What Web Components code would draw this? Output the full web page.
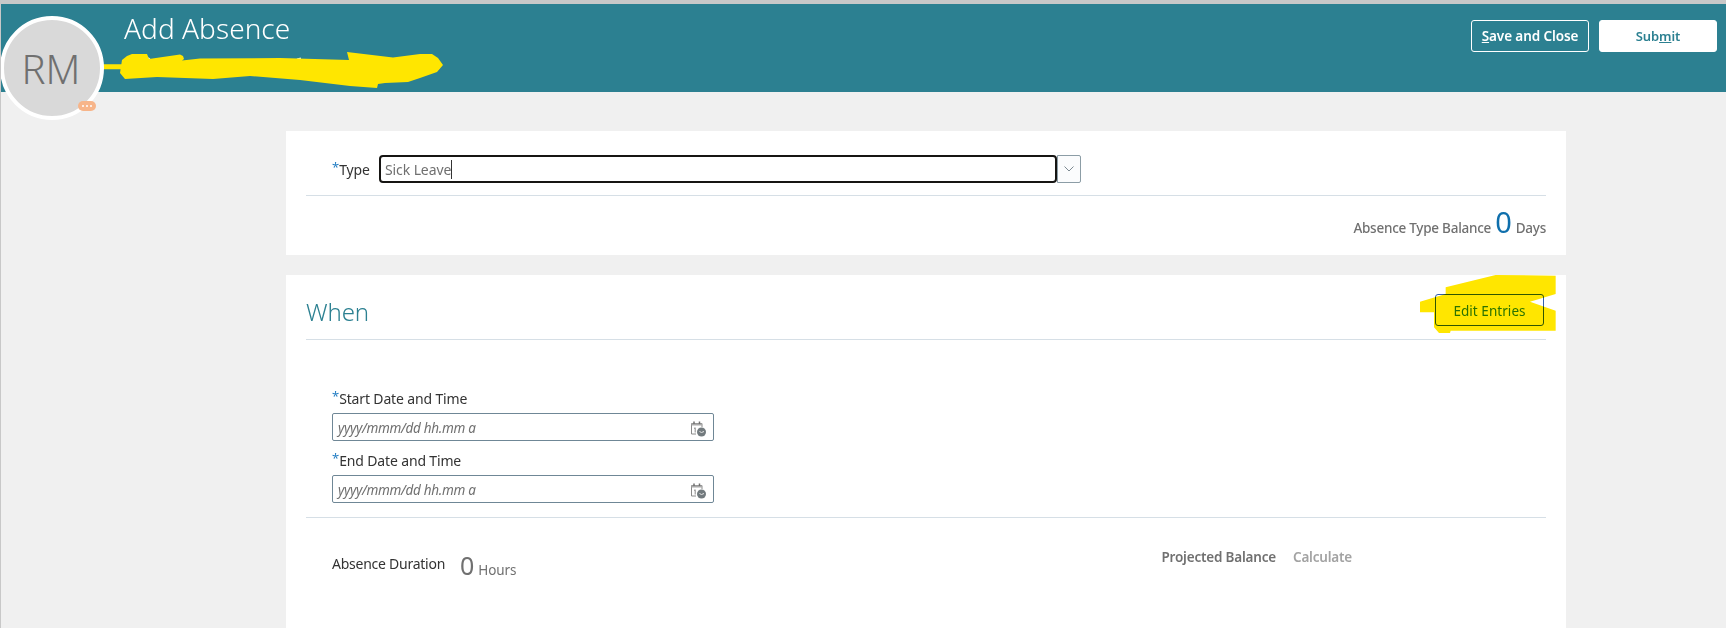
<!DOCTYPE html>
<html lang="en"><head><meta charset="utf-8"><title>Add Absence</title>
<style>
html,body{margin:0;padding:0;background:#f0f0f0;font-family:"Noto Sans","Open Sans",sans-serif;}
</style></head>
<body>
<template id="t-app"><style>
:host{display:flex;flex-direction:column;width:1726px;height:628px;overflow:hidden;box-sizing:border-box;border-top:4px solid #c8c8c8;border-left:1px solid #c8c8c8;background:#f0f0f0;position:relative;color:#333;}
main{display:flex;flex-direction:column;gap:20px;padding:39px 0 0 285px;width:1280px;}
</style><slot name="header"></slot><main><slot></slot></main></template>

<template id="t-header"><style>
:host{display:flex;justify-content:space-between;align-items:flex-start;height:88px;background:#2c8091;color:#fff;position:relative;flex:none;}
.titles{padding-left:123px;}
h1{margin:0;font:300 28px/38px "Noto Sans",sans-serif;padding-top:5px;letter-spacing:.05px;}
.actions{display:flex;gap:10px;padding:16px 9px 0 0;}
.scribble{position:absolute;left:-1px;top:-4px;width:460px;height:100px;pointer-events:none;}
</style>
<div class="titles"><h1><slot name="title"></slot></h1></div>
<div class="actions"><slot name="actions"></slot></div>
<svg class="scribble" viewBox="0 0 460 100" aria-hidden="true">
<path d="M297 59.500L301 58.500M148 58L150 60M436 70L439 68" stroke="#e8f2f4" stroke-width="2" fill="none"/>
<path d="M103 66.700L124 66.700" stroke="#ffe600" stroke-width="5" stroke-linecap="round" fill="none"/>
<path fill="#ffe600" d="M122 60L127 56 132 54 147 54 149 59 180 54.500 183 56 184 59 182 60.500 200 58.500 280 58 349 60 347 52 393 57.500 420 54 432 54 438 58 443 65 437 72 420 78 408 82 385 83 378 84 377 88 350 86 300 80 250 76 213 79 157 77 125 79 120 73Z"/>
</svg>
<slot name="avatar"></slot></template>

<template id="t-avatar"><style>
:host{display:flex;position:absolute;left:-1px;top:12px;width:104px;height:104px;box-sizing:border-box;border:4px solid #fff;border-radius:50%;background:#d9d9d9;align-items:center;justify-content:center;color:#707070;font:300 40px "Noto Sans",sans-serif;z-index:2;letter-spacing:0;padding-right:2px;}
.badge{position:absolute;left:74px;top:81px;width:18px;height:10px;background:#f7b58a;border-radius:5px;display:flex;align-items:center;justify-content:center;gap:2px;}
.badge i{width:2px;height:2px;background:#fff;border-radius:50%;}
</style><slot></slot><div class="badge"><i></i><i></i><i></i></div></template>

<template id="t-button"><style>
:host{display:inline-flex;align-items:center;justify-content:center;box-sizing:border-box;height:32px;width:118px;border-radius:3px;font:600 13.500px "Noto Sans",sans-serif;letter-spacing:-.1px;border:1px solid #fff;color:#fff;}
:host([solid]){background:#fff;color:#2c8091;font-size:13px;}
:host([outline]){border:1px solid #2f5fae;color:#2c8091;width:109px;font-weight:400;font-size:13.500px;letter-spacing:.05px;padding-top:1px;}
::slotted(u){text-underline-offset:2px;}
</style><slot></slot></template>

<template id="t-panel"><style>
:host{display:block;background:#fff;padding:0 20px;box-sizing:border-box;position:relative;}
</style><slot></slot></template>

<template id="t-rule"><style>:host{display:block;height:1px;background:#d6dfe6;}</style></template>

<template id="t-label"><style>
:host{display:inline-block;font:400 14px/15px "Noto Sans",sans-serif;color:#333;letter-spacing:-.15px;white-space:nowrap;}
.s{color:#267fc4;font-size:13px;position:relative;top:-3px;letter-spacing:0;}
</style><span class="s">*</span><slot></slot></template>

<template id="t-type"><style>
:host{display:flex;align-items:center;height:28px;padding:24px 0 12px 26px;}
.lab{width:47px;flex:none;}
.box{box-sizing:border-box;width:678px;height:28px;border:2px solid #161513;border-radius:4px;padding-left:4px;display:flex;align-items:center;font:400 14px "Noto Sans",sans-serif;letter-spacing:-.1px;color:#707070;}
.caret{display:inline-block;width:1px;height:19px;background:#333;}
.drop{box-sizing:border-box;width:24px;height:28px;border:1px solid #8c9da6;border-radius:0 2px 2px 0;background:#fbfcfd;display:flex;align-items:center;justify-content:center;}
</style><div class="lab"><slot name="label"></slot></div>
<div class="box"><slot name="value"></slot><span class="caret"></span></div>
<div class="drop"><svg width="12" height="8" viewBox="0 0 12 8" aria-hidden="true"><path d="M1.500 1.500L6 6 10.500 1.500" fill="none" stroke="#7d8a92" stroke-width="1"/></svg></div></template>

<template id="t-balance"><style>
:host{display:flex;justify-content:flex-end;align-items:baseline;height:59px;box-sizing:border-box;padding-top:6px;gap:4px;font:500 13.500px "Noto Sans",sans-serif;color:#707070;letter-spacing:-.25px;}
b{font:400 29px "Noto Sans",sans-serif;color:#0f6fac;letter-spacing:0;}
</style><slot name="a"></slot><b><slot name="n"></slot></b><slot name="b"></slot></template>

<template id="t-when"><style>
:host{display:flex;justify-content:space-between;align-items:center;height:64px;box-sizing:border-box;padding:19px 2px 13px 0;}
h2{margin:0;font:300 24px "Noto Sans",sans-serif;color:#2c8091;position:relative;top:1px;letter-spacing:-.1px;}
.wrap{position:relative;display:flex;}
svg{position:absolute;left:-15px;top:-19px;width:136px;height:62px;mix-blend-mode:multiply;pointer-events:none;}
</style><h2><slot name="title"></slot></h2>
<div class="wrap"><slot name="action"></slot>
<svg viewBox="118 38 408 186" aria-hidden="true"><path fill="#ffe600" d="M118 118L195 95 195 75 345 38 525 40 525 95 448 118 525 145 525 205 210 205 208 212 175 212 160 195 160 150 118 150Z"/></svg>
</div></template>

<template id="t-date"><style>
:host{display:flex;flex-direction:column;width:382px;}
.lab{height:26px;margin-top:-2px;}
.box{box-sizing:border-box;height:28px;border:1px solid #6f8796;border-radius:2px;display:flex;align-items:center;justify-content:space-between;padding:1px 6px 0 5px;font:italic 400 13.500px "Noto Sans",sans-serif;color:#707070;letter-spacing:-.3px;}
svg{display:block;}
</style><div class="lab"><slot name="label"></slot></div>
<div class="box"><slot name="hint"></slot>
<svg width="18" height="20" viewBox="0 0 18 20" aria-hidden="true"><path d="M2.500 5.500H13V9M2.500 5.500V16H7" fill="none" stroke="#8a8a8a" stroke-width="1"/><path d="M2.500 5.500H13V7.500H2.500Z" fill="#a9a9a9"/><path d="M5 3.500V6M10.500 3.500V6" stroke="#707070" stroke-width="1.500"/><path d="M5 10.500L6.200 9.800V14.500" fill="none" stroke="#8a8a8a"/><circle cx="12.500" cy="14" r="4.500" fill="#727a7e"/><path d="M12.500 14.500L15 13.500M12.500 14.500L10.500 13.500" stroke="#e6e6e6" stroke-width="1" fill="none"/></svg>
</div></template>

<template id="t-dates"><style>
:host{display:flex;flex-direction:column;gap:10px;padding:49px 0 14px 26px;}
</style><slot></slot></template>

<template id="t-duration"><style>
:host{display:flex;height:120px;box-sizing:border-box;padding-left:26px;font:400 14px "Noto Sans",sans-serif;}
.left{display:flex;align-items:flex-start;padding-top:36px;}
.name{color:#333;letter-spacing:-.25px;line-height:20px;margin-right:15px;}
.val{display:flex;align-items:baseline;gap:4px;margin-top:-6px;color:#707070;font-size:13.500px;letter-spacing:-.1px;}
.val b{font:400 25px "Noto Sans",sans-serif;}
.right{margin-left:auto;padding:29px 194px 0 0;display:flex;gap:17px;font-weight:600;font-size:13.500px;letter-spacing:-.2px;line-height:20px;color:#707070;}
.calc{color:#a3a3a3;}
</style><div class="left"><span class="name"><slot name="name"></slot></span><span class="val"><b><slot name="n"></slot></b><slot name="unit"></slot></span></div>
<div class="right"><slot name="proj"></slot><span class="calc"><slot name="calc"></slot></span></div></template>

<x-app>
  <x-header slot="header">
    <span slot="title">Add Absence</span>
    <x-avatar slot="avatar">RM</x-avatar>
    <x-button slot="actions"><span><u>S</u>ave and Close</span></x-button>
    <x-button slot="actions" solid><span>Sub<u>m</u>it</span></x-button>
  </x-header>
  <x-panel style="height:124px">
    <x-type>
      <x-label slot="label">Type</x-label>
      <span slot="value">Sick Leave</span>
    </x-type>
    <x-rule></x-rule>
    <x-balance><span slot="a">Absence Type Balance</span><span slot="n">0</span><span slot="b">Days</span></x-balance>
  </x-panel>
  <x-panel style="height:400px">
    <x-when>
      <span slot="title">When</span>
      <x-button slot="action" outline>Edit Entries</x-button>
    </x-when>
    <x-rule></x-rule>
    <x-dates>
      <x-date><x-label slot="label">Start Date and Time</x-label><span slot="hint">yyyy/mmm/dd hh.mm a</span></x-date>
      <x-date><x-label slot="label">End Date and Time</x-label><span slot="hint">yyyy/mmm/dd hh.mm a</span></x-date>
    </x-dates>
    <x-rule></x-rule>
    <x-duration>
      <span slot="name">Absence Duration</span><span slot="n">0</span><span slot="unit">Hours</span>
      <span slot="proj">Projected Balance</span><span slot="calc">Calculate</span>
    </x-duration>
  </x-panel>
</x-app>
<script>
const map={ 'x-app':'t-app','x-header':'t-header','x-avatar':'t-avatar','x-button':'t-button','x-panel':'t-panel','x-rule':'t-rule','x-label':'t-label','x-type':'t-type','x-balance':'t-balance','x-when':'t-when','x-date':'t-date','x-dates':'t-dates','x-duration':'t-duration'};
for(const [tag,id] of Object.entries(map)){
  customElements.define(tag,class extends HTMLElement{
    constructor(){super();this.attachShadow({mode:'open'}).appendChild(document.getElementById(id).content.cloneNode(true));}
  });
}
</script>
</body></html>
